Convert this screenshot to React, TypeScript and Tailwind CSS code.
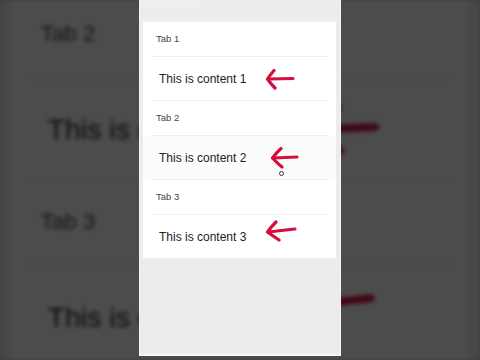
import type { ReactNode } from 'react'

const tabs = [
  { label: 'Tab 1', content: 'This is content 1' },
  { label: 'Tab 2', content: 'This is content 2' },
  { label: 'Tab 3', content: 'This is content 3' },
]

// hand-drawn red arrows next to each content line
function Arrow({ index }: { index: number }) {
  const common = {
    fill: 'none',
    stroke: '#d3103c',
    strokeWidth: 3.2,
    strokeLinecap: 'round' as const,
    strokeLinejoin: 'round' as const,
  }
  if (index === 0) {
    return (
      <svg width="30" height="22" viewBox="0 0 30 22" className="ml-[19px] shrink-0">
        <path d="M28 10.5 L3 11" {...common} />
        <path d="M9 2.5 Q5 7 2.5 11 Q6 16 10 20" {...common} />
      </svg>
    )
  }
  if (index === 1) {
    return (
      <svg width="30" height="23" viewBox="0 0 30 23" className="ml-[24px] shrink-0">
        <path d="M27 11 L3 12" {...common} />
        <path d="M11 2.5 Q6 7 2.5 12 Q7 17 12 21" {...common} />
      </svg>
    )
  }
  return (
    <svg width="32" height="23" viewBox="0 0 32 23" className="ml-[19px] -mt-[12px] shrink-0">
      <path d="M30 10 L3 13" {...common} />
      <path d="M11 3 Q6 8 2.5 13 Q8 17 14 21" {...common} />
    </svg>
  )
}

function Separator() {
  return <div className="h-px ml-[8px] mr-[7px] bg-[#efefef]" />
}

function Column() {
  const rows: ReactNode[] = []
  tabs.forEach((t, i) => {
    if (i > 0) rows.push(<Separator key={`s${i}`} />)
    rows.push(
      <div key={`h${i}`} className="h-[34px] flex items-center pl-[13px] text-[9.5px] text-[#444]">
        {t.label}
      </div>
    )
    rows.push(<Separator key={`m${i}`} />)
    rows.push(
      <div
        key={`c${i}`}
        className={
          'h-[43px] flex items-center pl-[16px] text-[12px] text-[#222] ' +
          (i === 1 ? 'bg-[#fcfcfc]' : 'bg-white')
        }
      >
        <span>{t.content}</span>
        <Arrow index={i} />
      </div>
    )
  })

  return (
    <div className="w-[202px] h-[356px] shrink-0 flex flex-col bg-[#ececec] border-x border-[#f3f3f3] border-b-2 border-b-[#f8f8f8] font-['Liberation_Sans',Arial,sans-serif]">
      <div className="h-[22px] flex flex-col">
        <div className="h-[8px] w-[60px] bg-[#efefef]" />
        <div className="flex-1" />
        <div className="h-[4px] bg-[#efefef]" />
      </div>
      <div className="ml-[3px] mr-[4px] bg-white">{rows}</div>
    </div>
  )
}

export default function App() {
  return (
    <div className="relative w-[480px] h-[360px] overflow-hidden bg-[#3c3c3c]">
      {/* blurred, enlarged copy behind the phone-width frame */}
      <div aria-hidden className="absolute inset-0 overflow-hidden brightness-[0.3] blur-[2px]">
        <div className="absolute left-0 top-[-246px] origin-top-left scale-[2.376]">
          <Column />
        </div>
      </div>

      <div className="relative flex justify-center">
        <Column />
      </div>

      {/* mouse cursor ring */}
      <div className="absolute left-[279px] top-[171px] w-[5px] h-[5px] rounded-full border border-[#333] bg-white" />
    </div>
  )
}
